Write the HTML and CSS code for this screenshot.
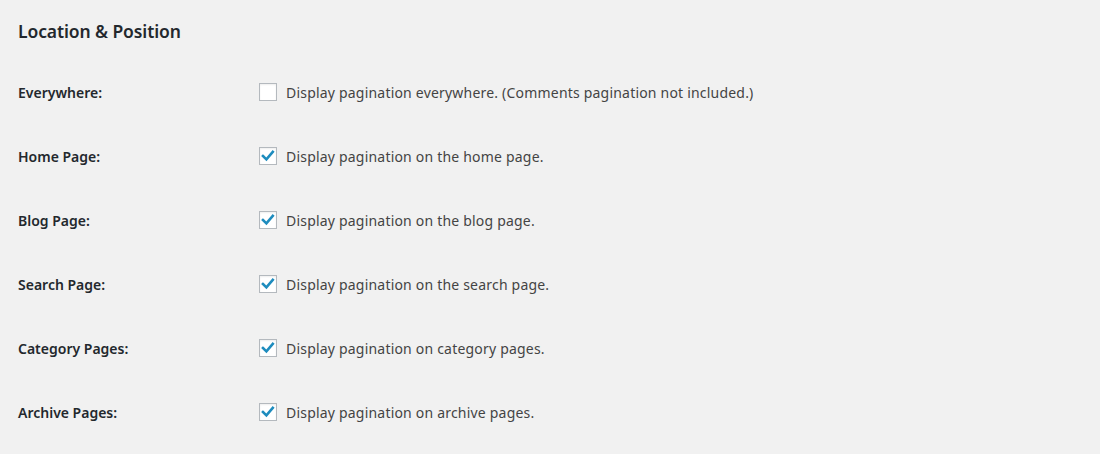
FILE: index.html
```html
<!DOCTYPE html>
<html>
<head>
<meta charset="utf-8">
<link rel="stylesheet" href="styles.css">
</head>
<body>
<div class="wrap">
  <h2 class="title">Location &amp; Position</h2>
  <div class="form">
    <div class="row">
      <div class="label">Everywhere:</div>
      <div class="field"><span class="cb"></span><span class="desc">Display pagination everywhere. (Comments pagination not included.)</span></div>
    </div>
    <div class="row">
      <div class="label">Home Page:</div>
      <div class="field"><span class="cb checked"><svg viewBox="0 0 18 18"><path d="M3.3 9 L7.2 12.8 L14.4 4.4"/></svg></span><span class="desc">Display pagination on the home page.</span></div>
    </div>
    <div class="row">
      <div class="label">Blog Page:</div>
      <div class="field"><span class="cb checked"><svg viewBox="0 0 18 18"><path d="M3.3 9 L7.2 12.8 L14.4 4.4"/></svg></span><span class="desc">Display pagination on the blog page.</span></div>
    </div>
    <div class="row">
      <div class="label">Search Page:</div>
      <div class="field"><span class="cb checked"><svg viewBox="0 0 18 18"><path d="M3.3 9 L7.2 12.8 L14.4 4.4"/></svg></span><span class="desc">Display pagination on the search page.</span></div>
    </div>
    <div class="row">
      <div class="label">Category Pages:</div>
      <div class="field"><span class="cb checked"><svg viewBox="0 0 18 18"><path d="M3.3 9 L7.2 12.8 L14.4 4.4"/></svg></span><span class="desc">Display pagination on category pages.</span></div>
    </div>
    <div class="row">
      <div class="label">Archive Pages:</div>
      <div class="field"><span class="cb checked"><svg viewBox="0 0 18 18"><path d="M3.3 9 L7.2 12.8 L14.4 4.4"/></svg></span><span class="desc">Display pagination on archive pages.</span></div>
    </div>
  </div>
</div>
</body>
</html>
```
FILE: styles.css
```css
html, body {
  margin: 0;
  padding: 0;
  background: #f1f1f1;
}
body {
  font-family: "Noto Sans", "Open Sans", sans-serif;
  font-size: 14px;
  color: #444;
  height: 454px;
  overflow: hidden;
}
.wrap {
  padding: 19px 18px 0 18px;
}
.title {
  margin: 0;
  font-size: 17.5px;
  font-weight: 600;
  color: #23282d;
  line-height: 24px;
  letter-spacing: -0.1px;
}
.form {
  margin-top: 17px;
  display: flex;
  flex-direction: column;
}
.row {
  display: flex;
  align-items: center;
  height: 64px;
}
.label {
  width: 241px;
  font-weight: 600;
  color: #23282d;
  font-size: 14px;
}
.field {
  display: flex;
  align-items: center;
}
.cb {
  box-sizing: border-box;
  width: 18px;
  height: 18px;
  border: 1px solid #b4b9be;
  background: #fff;
  box-shadow: inset 0 1px 2px rgba(0,0,0,.07);
  display: flex;
  margin-right: 9px;
}
.cb svg {
  width: 16px;
  height: 16px;
}
.cb svg path {
  fill: none;
  stroke: #1e8cbe;
  stroke-width: 2.9;
  stroke-linecap: square;
}
.desc {
  font-size: 14px;
  letter-spacing: 0.2px;
  color: #444;
}
```
